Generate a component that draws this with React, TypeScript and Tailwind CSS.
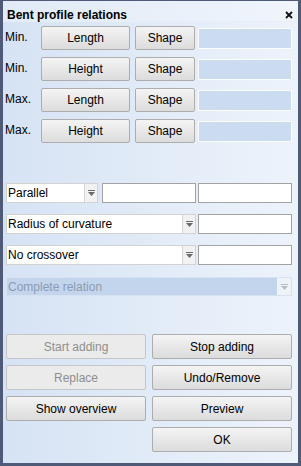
import React from "react";

const font = { fontFamily: '"Liberation Sans", Arial, sans-serif' };

function Btn({ children, disabled, className = "" }: { children: React.ReactNode; disabled?: boolean; className?: string }) {
  return (
    <button
      disabled={disabled}
      className={`flex items-center justify-center rounded-[2px] border text-[12px] leading-none ${
        disabled
          ? "border-[#c6c6c6] bg-[#ebebeb] text-[#8e8e8e]"
          : "border-[#adadad] bg-linear-to-b from-[#f4f4f4] to-[#dcdcdc] text-black"
      } ${className}`}
    >
      {children}
    </button>
  );
}

function Arrow({ light }: { light?: boolean }) {
  return (
    <svg width="7" height="6" viewBox="0 0 7 6">
      <rect x="0" y="0" width="7" height="1" fill={light ? "#b4bcc6" : "#6a6a6a"} />
      <polygon points="0,2 7,2 3.5,6" fill={light ? "#b4bcc6" : "#6a6a6a"} />
    </svg>
  );
}

function Combo({ label, width }: { label: string; width: string }) {
  return (
    <div className={`flex h-[20px] ${width} border border-[#d2d2d2] bg-white`}>
      <div className="flex flex-1 items-center pl-[1px] text-[12px] text-black">{label}</div>
      <div className="flex w-[13px] items-center justify-center border-l border-[#d6d6d6] bg-[#f2f2f2]">
        <Arrow />
      </div>
    </div>
  );
}

function TextBox() {
  return <div className="h-[20px] w-[94px] border border-[#a3a3a3] bg-white" />;
}

function LimitRow({ label, what }: { label: string; what: string }) {
  return (
    <div className="flex h-[24px] items-start">
      <div className="w-[38px] pl-[2px] pt-[2px] text-[12px] text-black">{label}</div>
      <Btn className="h-[24px] w-[89px]">{what}</Btn>
      <Btn className="ml-[5px] h-[24px] w-[60px]">Shape</Btn>
      <div className="ml-[3px] mt-[2px] h-[21px] w-[94px] border border-[#fafcff] bg-[#cbdbf0]" />
    </div>
  );
}

export default function App() {
  return (
    <div
      style={font}
      className="flex h-[466px] w-[301px] flex-col border-t border-b-[3px] border-l-[3px] border-r-[3px] border-[#4f5a78] bg-linear-to-r from-[#d6e3f4] to-[#edf3fb]"
    >
      <div className="flex h-[21px] shrink-0 items-center justify-between border-b border-[#e6eef9] bg-linear-to-r from-[#e1eaf6] to-[#f0f5fc] pl-[4px] pr-[5px]">
        <span className="pt-[8px] text-[12px] font-bold text-black">Bent profile relations</span>
        <svg width="8" height="8" viewBox="0 0 8 8" className="mt-[7px]">
          <path d="M1 1 L7 7 M7 1 L1 7" stroke="#111" strokeWidth="1.8" />
        </svg>
      </div>

      <div className="mt-[4px] flex flex-col gap-[7px]">
        <LimitRow label="Min." what="Length" />
        <LimitRow label="Min." what="Height" />
        <LimitRow label="Max." what="Length" />
        <LimitRow label="Max." what="Height" />
      </div>

      <div className="mt-[40px] flex flex-col gap-[11px] pl-[3px]">
        <div className="flex">
          <Combo label="Parallel" width="w-[92px]" />
          <div className="ml-[4px]">
            <TextBox />
          </div>
          <div className="ml-[2px]">
            <TextBox />
          </div>
        </div>
        <div className="flex">
          <Combo label="Radius of curvature" width="w-[190px]" />
          <div className="ml-[2px]">
            <TextBox />
          </div>
        </div>
        <div className="flex">
          <Combo label="No crossover" width="w-[190px]" />
          <div className="ml-[2px]">
            <TextBox />
          </div>
        </div>
        <div className="mt-[1px] flex h-[19px] w-[286px] border border-[#d6e2f0] bg-[#c3d5ec]">
          <div className="flex flex-1 items-center pl-[1px] text-[12px] text-[#8b9bb2]">Complete relation</div>
          <div className="flex w-[14px] items-center justify-center bg-[#eef3f9]">
            <Arrow light />
          </div>
        </div>
      </div>

      <div className="mt-[38px] grid grid-cols-[140px_140px] gap-x-[6px] gap-y-[6px] pl-[3px]">
        <Btn disabled className="h-[25px]">Start adding</Btn>
        <Btn className="h-[25px]">Stop adding</Btn>
        <Btn disabled className="h-[25px]">Replace</Btn>
        <Btn className="h-[25px]">Undo/Remove</Btn>
        <Btn className="h-[25px]">Show overview</Btn>
        <Btn className="h-[25px]">Preview</Btn>
        <div />
        <Btn className="h-[25px]">OK</Btn>
      </div>
    </div>
  );
}
